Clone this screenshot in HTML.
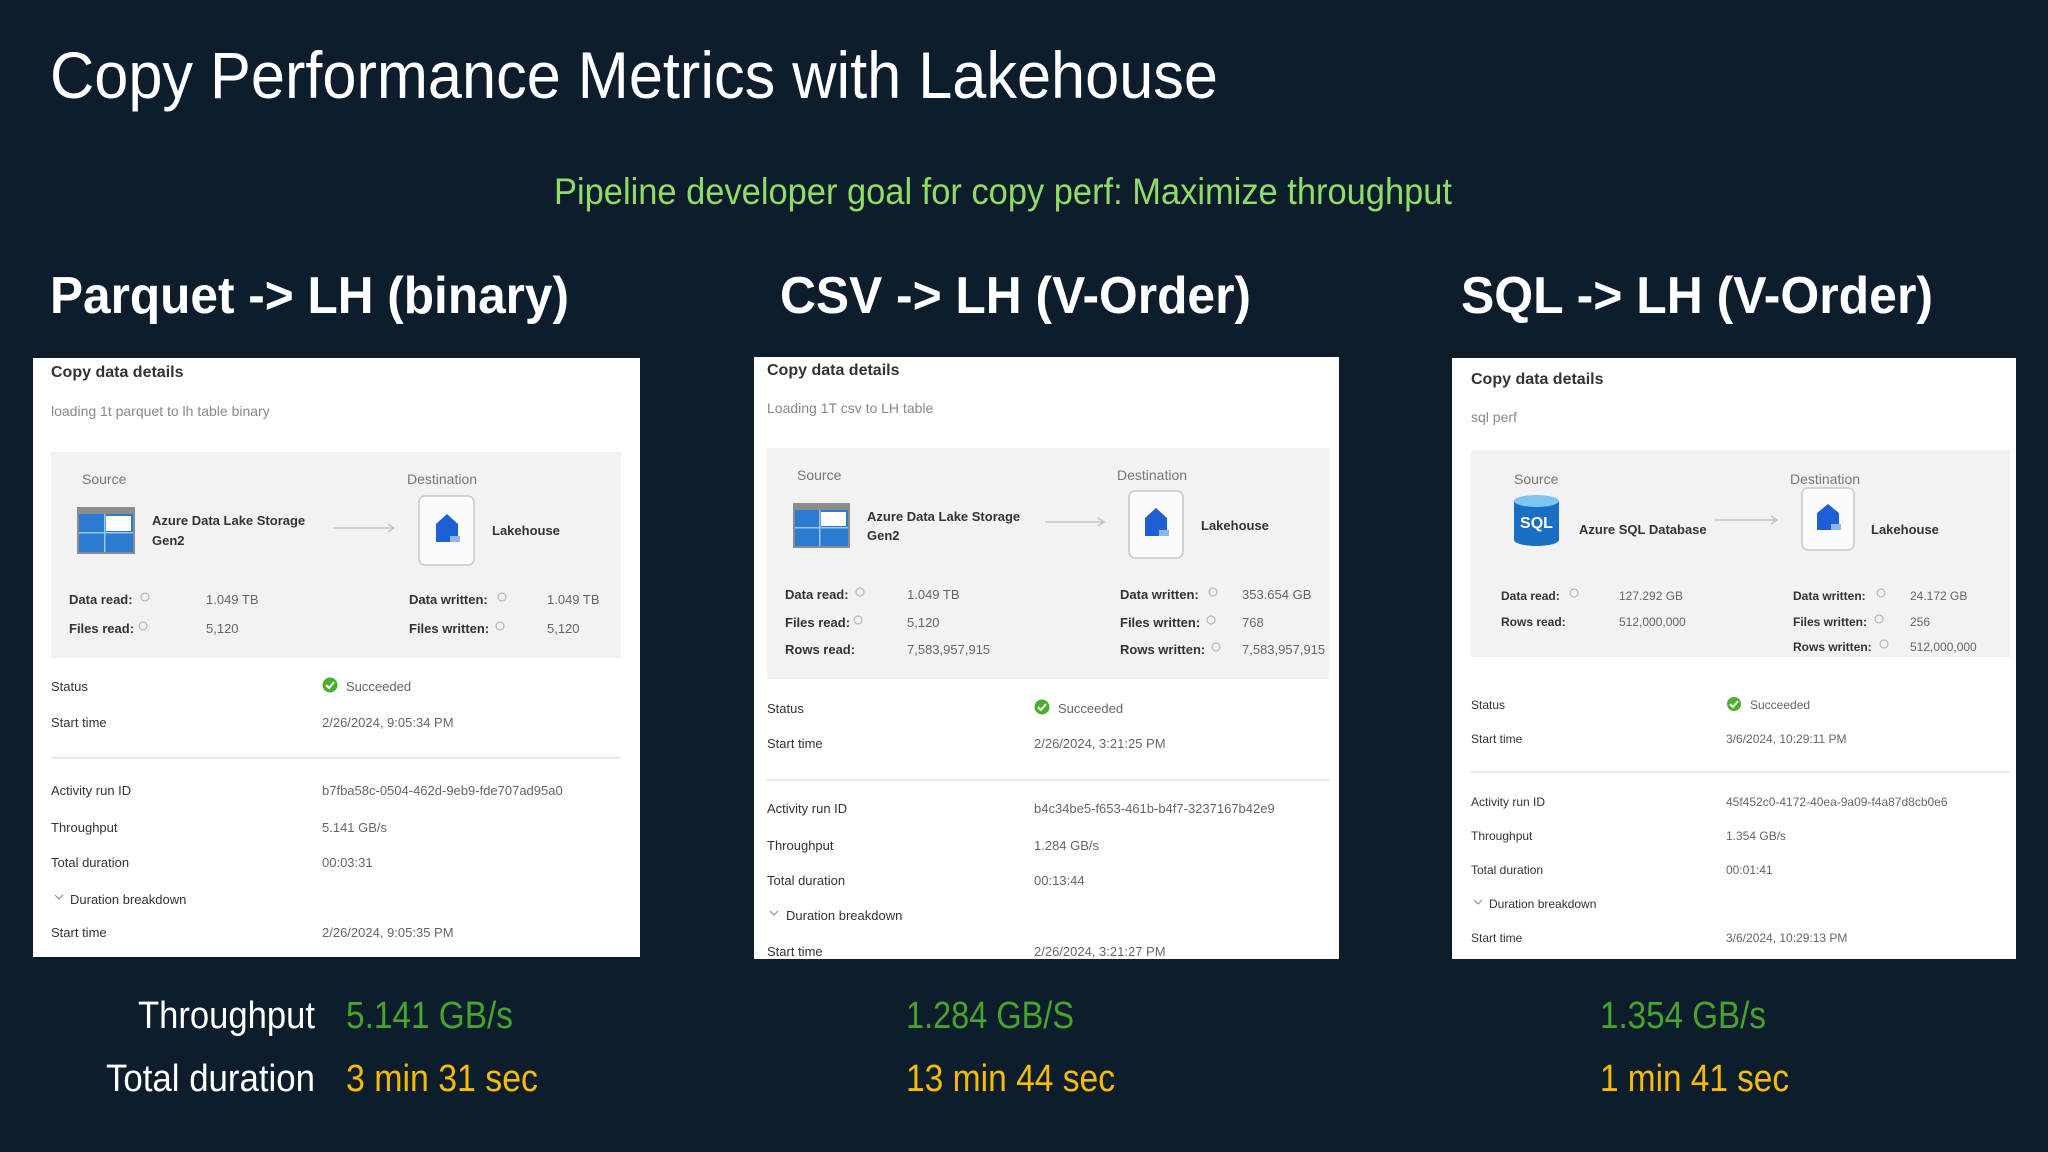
<!DOCTYPE html>
<html><head><meta charset="utf-8"><style>
html,body{margin:0;padding:0;background:#0d1d2b;}
svg{display:block}
.t{font-family:"Liberation Sans",sans-serif}
.pt{font-family:"Liberation Sans",sans-serif;font-weight:bold;font-size:16px;fill:#333}
.ps{font-family:"Liberation Sans",sans-serif;font-size:14px;fill:#888}
.lb{font-family:"Liberation Sans",sans-serif;font-size:13px;fill:#333;font-weight:bold}
.lr{font-family:"Liberation Sans",sans-serif;font-size:13px;fill:#333}
.vl{font-family:"Liberation Sans",sans-serif;font-size:13px;fill:#666}
.sg{font-family:"Liberation Sans",sans-serif;font-size:14px;fill:#777}
</style></head><body>
<svg width="2048" height="1152" viewBox="0 0 2048 1152" xmlns="http://www.w3.org/2000/svg">
<rect width="2048" height="1152" fill="#0d1d2b"/>
<text class="t" x="50" y="98" font-size="66" fill="#fff" textLength="1168" lengthAdjust="spacingAndGlyphs">Copy Performance Metrics with Lakehouse</text>
<text class="t" x="554" y="204" font-size="37" fill="#8fdc66" textLength="898" lengthAdjust="spacingAndGlyphs">Pipeline developer goal for copy perf: Maximize throughput</text>
<text class="t" x="50" y="313" font-size="52" font-weight="bold" fill="#fff" textLength="519" lengthAdjust="spacingAndGlyphs">Parquet -&gt; LH (binary)</text>
<text class="t" x="780" y="313" font-size="52" font-weight="bold" fill="#fff" textLength="471" lengthAdjust="spacingAndGlyphs">CSV -&gt; LH (V-Order)</text>
<text class="t" x="1461" y="313" font-size="52" font-weight="bold" fill="#fff" textLength="472" lengthAdjust="spacingAndGlyphs">SQL -&gt; LH (V-Order)</text>

<!-- bottom metrics -->
<g class="t" font-size="38">
<text x="138" y="1028" fill="#fff" textLength="177" lengthAdjust="spacingAndGlyphs">Throughput</text>
<text x="106" y="1091" fill="#fff" textLength="209" lengthAdjust="spacingAndGlyphs">Total duration</text>
<text x="346" y="1028" fill="#46a32c" textLength="167" lengthAdjust="spacingAndGlyphs">5.141 GB/s</text>
<text x="346" y="1091" fill="#f7bc00" textLength="192" lengthAdjust="spacingAndGlyphs">3 min 31 sec</text>
<text x="906" y="1028" fill="#46a32c" textLength="168" lengthAdjust="spacingAndGlyphs">1.284 GB/S</text>
<text x="906" y="1091" fill="#f7bc00" textLength="209" lengthAdjust="spacingAndGlyphs">13 min 44 sec</text>
<text x="1600" y="1028" fill="#46a32c" textLength="166" lengthAdjust="spacingAndGlyphs">1.354 GB/s</text>
<text x="1600" y="1091" fill="#f7bc00" textLength="189" lengthAdjust="spacingAndGlyphs">1 min 41 sec</text>
</g>

<!-- PANEL 1 -->
<rect x="33" y="358" width="607" height="599" fill="#fff"/>
<text class="pt" x="51" y="377">Copy data details</text>
<text class="ps" x="51" y="416">loading 1t parquet to lh table binary</text>
<rect x="51" y="452" width="570" height="206" fill="#f2f2f2"/>
<text class="sg" x="82" y="484">Source</text>
<g transform="translate(77,507)">
<rect width="58" height="47" fill="#8c8c8c"/><rect x="2" y="7" width="54" height="38" fill="#2b7bd0"/>
<rect x="29" y="9" width="25" height="15" fill="#fff"/><rect x="2" y="25" width="54" height="1.5" fill="#9cc6f0"/><rect x="27" y="7" width="1.5" height="38" fill="#9cc6f0"/></g>
<text class="lb" x="152" y="525">Azure Data Lake Storage</text><text class="lb" x="152" y="545">Gen2</text>
<path d="M333 528H394M388 524L394 528L388 532" stroke="#c4c4c4" stroke-width="1.5" fill="none"/>
<text class="sg" x="407" y="484">Destination</text>
<g transform="translate(419,496)"><rect width="55" height="69" rx="6" fill="#fbfbfb" stroke="#c8c8c8" stroke-width="1.5"/>
<path d="M17 46V28L28 18L39 28V46Z" fill="#1e5fd3"/><rect x="31" y="40" width="10" height="6" fill="#8fb4ee"/></g>
<text class="lb" x="492" y="535">Lakehouse</text>
<g class="lb"><text x="69" y="604">Data read:</text><text x="69" y="633">Files read:</text>
<text x="409" y="604">Data written:</text><text x="409" y="633">Files written:</text></g>
<g fill="none" stroke="#aaa"><circle cx="145" cy="597" r="4"/><circle cx="143" cy="626" r="4"/><circle cx="502" cy="597" r="4"/><circle cx="500" cy="626" r="4"/></g>
<g class="vl"><text x="206" y="604">1.049 TB</text><text x="206" y="633">5,120</text><text x="547" y="604">1.049 TB</text><text x="547" y="633">5,120</text></g>
<g class="lr"><text x="51" y="691">Status</text><text x="51" y="727">Start time</text><text x="51" y="795">Activity run ID</text><text x="51" y="832">Throughput</text><text x="51" y="867">Total duration</text><text x="70" y="904">Duration breakdown</text><text x="51" y="937">Start time</text></g>
<path d="M55 895L59 899L63 895" stroke="#888" fill="none"/>
<circle cx="330" cy="685" r="7.5" fill="#4caf2a"/><path d="M326 685L329 688L334 682" stroke="#fff" stroke-width="2" fill="none"/>
<g class="vl"><text x="346" y="691">Succeeded</text><text x="322" y="727">2/26/2024, 9:05:34 PM</text><text x="322" y="795">b7fba58c-0504-462d-9eb9-fde707ad95a0</text><text x="322" y="832">5.141 GB/s</text><text x="322" y="867">00:03:31</text><text x="322" y="937">2/26/2024, 9:05:35 PM</text></g>
<rect x="51" y="757" width="570" height="1.5" fill="#e2e2e2"/>

<!-- PANEL 2 -->
<rect x="754" y="357" width="585" height="602" fill="#fff"/>
<text class="pt" x="767" y="375">Copy data details</text>
<text class="ps" x="767" y="413">Loading 1T csv to LH table</text>
<rect x="767" y="448" width="562" height="231" fill="#f2f2f2"/>
<text class="sg" x="797" y="480">Source</text>
<g transform="translate(793,503)">
<rect width="57" height="45" fill="#8c8c8c"/><rect x="2" y="7" width="53" height="36" fill="#2b7bd0"/>
<rect x="28" y="9" width="25" height="14" fill="#fff"/><rect x="2" y="24" width="53" height="1.5" fill="#9cc6f0"/><rect x="26" y="7" width="1.5" height="36" fill="#9cc6f0"/></g>
<text class="lb" x="867" y="521">Azure Data Lake Storage</text><text class="lb" x="867" y="540">Gen2</text>
<path d="M1045 522H1104M1098 518L1104 522L1098 526" stroke="#c4c4c4" stroke-width="1.5" fill="none"/>
<text class="sg" x="1117" y="480">Destination</text>
<g transform="translate(1129,491)"><rect width="54" height="67" rx="6" fill="#fbfbfb" stroke="#c8c8c8" stroke-width="1.5"/>
<path d="M16 45V27L27 17L38 27V45Z" fill="#1e5fd3"/><rect x="30" y="39" width="10" height="6" fill="#8fb4ee"/></g>
<text class="lb" x="1201" y="530">Lakehouse</text>
<g class="lb"><text x="785" y="599">Data read:</text><text x="785" y="627">Files read:</text><text x="785" y="654">Rows read:</text>
<text x="1120" y="599">Data written:</text><text x="1120" y="627">Files written:</text><text x="1120" y="654">Rows written:</text></g>
<g fill="none" stroke="#aaa"><circle cx="860" cy="592" r="4"/><circle cx="858" cy="620" r="4"/><circle cx="1213" cy="592" r="4"/><circle cx="1211" cy="620" r="4"/><circle cx="1216" cy="647" r="4"/></g>
<g class="vl"><text x="907" y="599">1.049 TB</text><text x="907" y="627">5,120</text><text x="907" y="654">7,583,957,915</text><text x="1242" y="599">353.654 GB</text><text x="1242" y="627">768</text><text x="1242" y="654">7,583,957,915</text></g>
<g class="lr"><text x="767" y="713">Status</text><text x="767" y="748">Start time</text><text x="767" y="813">Activity run ID</text><text x="767" y="850">Throughput</text><text x="767" y="885">Total duration</text><text x="786" y="920">Duration breakdown</text><text x="767" y="956">Start time</text></g>
<path d="M770 911L774 915L778 911" stroke="#888" fill="none"/>
<circle cx="1042" cy="707" r="7.5" fill="#4caf2a"/><path d="M1038 707L1041 710L1046 704" stroke="#fff" stroke-width="2" fill="none"/>
<g class="vl"><text x="1058" y="713">Succeeded</text><text x="1034" y="748">2/26/2024, 3:21:25 PM</text><text x="1034" y="813">b4c34be5-f653-461b-b4f7-3237167b42e9</text><text x="1034" y="850">1.284 GB/s</text><text x="1034" y="885">00:13:44</text><text x="1034" y="956">2/26/2024, 3:21:27 PM</text></g>
<rect x="767" y="779" width="562" height="1.5" fill="#e2e2e2"/>

<!-- PANEL 3 -->
<rect x="1452" y="358" width="564" height="601" fill="#fff"/>
<text class="pt" x="1471" y="384">Copy data details</text>
<text class="ps" x="1471" y="422">sql perf</text>
<rect x="1471" y="450" width="539" height="207" fill="#f2f2f2"/>
<text class="sg" x="1514" y="484">Source</text>
<g transform="translate(1514,495)">
<path d="M0 6V45A22.5 6 0 0 0 45 45V6Z" fill="#1a6fc4"/><ellipse cx="22.5" cy="6" rx="22.5" ry="6" fill="#7fc4f2"/>
<text x="22.5" y="33" text-anchor="middle" font-family="Liberation Sans,sans-serif" font-weight="bold" font-size="16" fill="#fff">SQL</text></g>
<text class="lb" x="1579" y="534">Azure SQL Database</text>
<path d="M1715 520H1777M1771 516L1777 520L1771 524" stroke="#c4c4c4" stroke-width="1.5" fill="none"/>
<text class="sg" x="1790" y="484">Destination</text>
<g transform="translate(1802,488)"><rect width="52" height="62" rx="6" fill="#fbfbfb" stroke="#c8c8c8" stroke-width="1.5"/>
<path d="M15 42V25L26 16L37 25V42Z" fill="#1e5fd3"/><rect x="29" y="36" width="10" height="6" fill="#8fb4ee"/></g>
<text class="lb" x="1871" y="534">Lakehouse</text>
<g class="lb" font-size="12"><text x="1501" y="600" font-size="12">Data read:</text><text x="1501" y="626" font-size="12">Rows read:</text>
<text x="1793" y="600" font-size="12">Data written:</text><text x="1793" y="626" font-size="12">Files written:</text><text x="1793" y="651" font-size="12">Rows written:</text></g>
<g fill="none" stroke="#aaa"><circle cx="1574" cy="593" r="4"/><circle cx="1881" cy="593" r="4"/><circle cx="1879" cy="619" r="4"/><circle cx="1884" cy="644" r="4"/></g>
<g class="vl"><text x="1619" y="600" font-size="12">127.292 GB</text><text x="1619" y="626" font-size="12">512,000,000</text><text x="1910" y="600" font-size="12">24.172 GB</text><text x="1910" y="626" font-size="12">256</text><text x="1910" y="651" font-size="12">512,000,000</text></g>
<g class="lr"><text x="1471" y="709" font-size="12">Status</text><text x="1471" y="743" font-size="12">Start time</text><text x="1471" y="806" font-size="12">Activity run ID</text><text x="1471" y="840" font-size="12">Throughput</text><text x="1471" y="874" font-size="12">Total duration</text><text x="1489" y="908" font-size="12">Duration breakdown</text><text x="1471" y="942" font-size="12">Start time</text></g>
<path d="M1474 900L1478 904L1482 900" stroke="#888" fill="none"/>
<circle cx="1734" cy="704" r="7" fill="#4caf2a"/><path d="M1730 704L1733 707L1738 701" stroke="#fff" stroke-width="2" fill="none"/>
<g class="vl"><text x="1750" y="709" font-size="12">Succeeded</text><text x="1726" y="743" font-size="12">3/6/2024, 10:29:11 PM</text><text x="1726" y="806" font-size="12">45f452c0-4172-40ea-9a09-f4a87d8cb0e6</text><text x="1726" y="840" font-size="12">1.354 GB/s</text><text x="1726" y="874" font-size="12">00:01:41</text><text x="1726" y="942" font-size="12">3/6/2024, 10:29:13 PM</text></g>
<rect x="1471" y="771" width="539" height="1.5" fill="#e2e2e2"/>
</svg>
</body></html>
